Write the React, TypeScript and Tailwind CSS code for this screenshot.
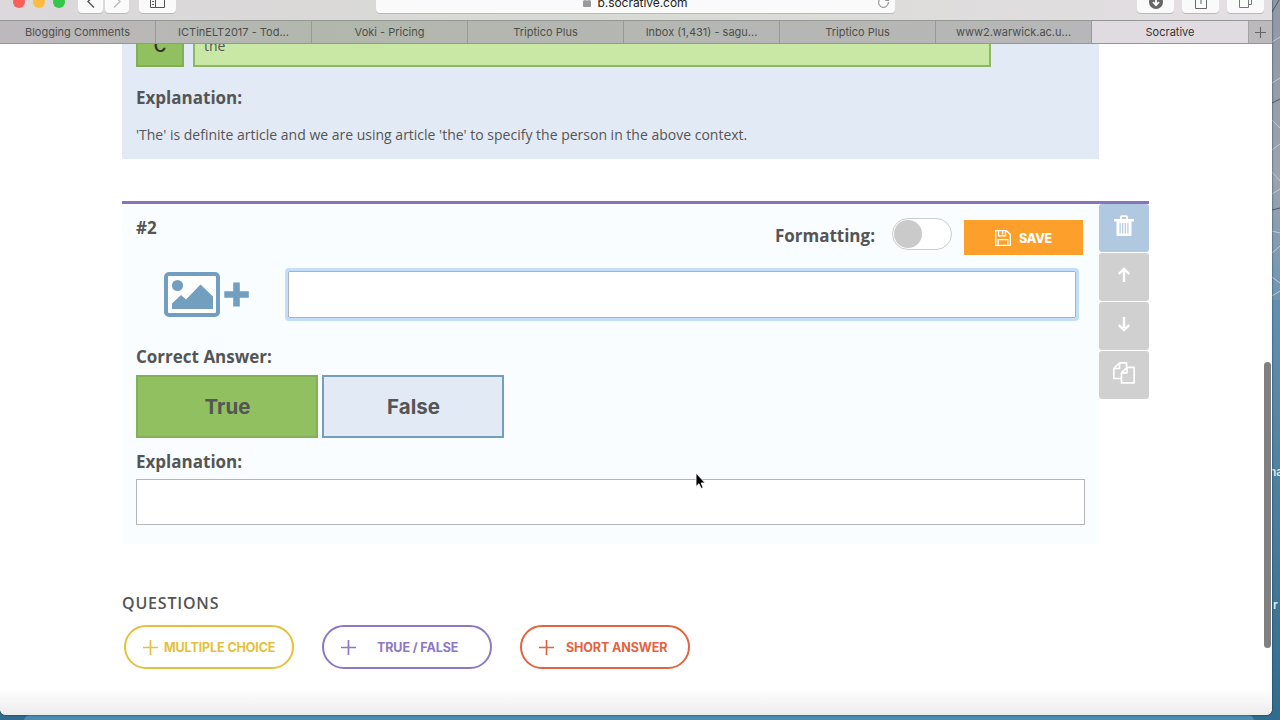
import React from 'react';
import { RotateCw } from 'lucide-react';

const tabs = [
  'Blogging Comments',
  'ICTinELT2017 - Tod...',
  'Voki - Pricing',
  'Triptico Plus',
  'Inbox (1,431) - sagu...',
  'Triptico Plus',
  'www2.warwick.ac.u...',
];

const toolButton =
  'h-[25px] shrink-0 rounded-[4px] bg-[#fafafa] shadow-[0_1px_0_#b9b9bb] flex items-end justify-center';

const Toolbar = () => (
  <div className="h-5 overflow-hidden flex items-end pb-[7px] bg-linear-to-r from-[#dcd8dc] via-[#d8dad4] via-50% to-[#e4dfe4]">
    <div className="flex gap-2 pl-[13px] mb-[5px] shrink-0">
      <div className="size-3 rounded-full bg-[#fb5f5a]" />
      <div className="size-3 rounded-full bg-[#fcbc40]" />
      <div className="size-3 rounded-full bg-[#33c748]" />
    </div>
    <div className={`${toolButton} w-[25px] ml-[13px]`}>
      <svg width="8" height="13" viewBox="0 0 8 13" className="mb-[5px]" fill="none" stroke="#555" strokeWidth="1.4">
        <path d="M7 .5 1 6.5l6 6" />
      </svg>
    </div>
    <div className={`${toolButton} w-6 ml-[2px]`}>
      <svg width="8" height="13" viewBox="0 0 8 13" className="mb-[5px]" fill="none" stroke="#bbb" strokeWidth="1.4">
        <path d="m1 .5 6 6-6 6" />
      </svg>
    </div>
    <div className={`${toolButton} w-[37px] ml-[10px]`}>
      <svg width="15" height="13" viewBox="0 0 15 13" className="mb-[5px]" fill="none" stroke="#555">
        <path d="M.5.5h14v12H.5zM5.5.5v12M2 6.5h2M2 9.5h2" />
      </svg>
    </div>
    <div className={`${toolButton} w-[519px] ml-[200px] relative`}>
      <div className="flex items-end gap-[6px] mb-[2px]">
        <svg width="8" height="11" viewBox="0 0 8 11" className="mb-[4px]">
          <path d="M2 5V3q0-2 2-2t2 2v2" fill="none" stroke="#999" strokeWidth="1.2" />
          <rect y="4.500" width="8" height="6.500" rx=".8" fill="#999" />
        </svg>
        <span className="text-[12px] leading-4 text-[#222] tracking-[-0.05px]">b.socrative.com</span>
      </div>
      <RotateCw size={13} className="absolute right-[5px] bottom-[4px] text-[#777]" strokeWidth={1.8} />
    </div>
    <div className={`${toolButton} w-[37px] ml-[242px]`}>
      <svg width="14" height="14" viewBox="0 0 14 14" className="mb-[4px]">
        <circle cx="7" cy="7" r="7" fill="#666" />
        <path d="M7 3v7M4 7l3 3.2L10 7" fill="none" stroke="#fff" strokeWidth="1.8" />
      </svg>
    </div>
    <div className={`${toolButton} w-[37px] ml-2`}>
      <svg width="12" height="16" viewBox="0 0 12 16" className="mb-[4px]" fill="none" stroke="#666">
        <path d="M4 5.5H.5v10h11v-10H8M6 11V1" />
      </svg>
    </div>
    <div className={`${toolButton} w-[37px] ml-2`}>
      <svg width="13" height="14" viewBox="0 0 13 14" className="mb-[5px]" fill="none" stroke="#777">
        <path d="M.5 2.5h9v11h-9zM3 .5h9.500v10H10" />
      </svg>
    </div>
  </div>
);

const TabBar = () => (
  <div className="h-6 flex border-y border-[#949894] text-[11px] text-[#4c4f4c] bg-linear-to-r from-[#bdb8bd] via-[#b2b7ad] via-25% to-[#b9b6bb]">
    {tabs.map((tab, i) => (
      <div key={i} className="w-[156px] shrink-0 flex items-center justify-center border-r border-[#979b97] pt-px whitespace-nowrap">
        {tab}
      </div>
    ))}
    <div className="w-[156px] shrink-0 flex items-center justify-center pt-px bg-[#dfdbe0] text-[#333]">Socrative</div>
    <div className="flex-1 flex items-center justify-center border-l border-[#a5a3a7] bg-[#bcb9bd]">
      <svg width="11" height="11" viewBox="0 0 11 11" stroke="#666" strokeWidth="1.1">
        <path d="M5.500 0v11M0 5.500h11" />
      </svg>
    </div>
  </div>
);

const PreviousQuestion = () => (
  <div className="w-[977px] h-[115px] shrink-0 bg-[#e2eaf5] px-[14px] overflow-hidden">
    <div className="flex gap-[9px] h-[48px] -mt-[25px]">
      <div className="w-12 flex items-center justify-center bg-[#90c060] border-2 border-[#82ae56] text-[17px] font-semibold text-[#333] pt-[7px]">
        C
      </div>
      <div className="w-[798px] flex items-center pl-[9px] pt-[4px] bg-[#c9e7a5] border-2 border-[#8cb863] text-[14px] font-['Open_Sans'] text-[#555]">
        the
      </div>
    </div>
    <div className="mt-[19px] text-[17px] leading-6 font-bold font-['Open_Sans'] text-[#555]">Explanation:</div>
    <div className="mt-[15px] text-[14px] leading-5 font-['Open_Sans'] text-[#555] whitespace-nowrap">
      'The' is definite article and we are using article 'the' to specify the person in the above context.
    </div>
  </div>
);

const ImagePlusIcon = () => (
  <svg width="86" height="46" viewBox="0 0 86 46" fill="#729fc0">
    <rect x="2" y="2" width="52" height="41" rx="3" fill="#fff" stroke="#729fc0" strokeWidth="4" />
    <circle cx="13.500" cy="13.500" r="5.600" />
    <path d="M8 37v-5.500l9-8.500 5 4.500L36.500 12.500 49 24.500V37z" />
    <path d="M69.200 10.500h6.600v8.700h9v6.600h-9v8.700h-6.600v-8.700h-8.900v-6.600h8.900z" />
  </svg>
);

const SaveIcon = () => (
  <svg width="16" height="16" viewBox="0 0 16 16" fill="none" stroke="#fff" strokeWidth="1.300">
    <path d="M.7.700h10.800l3.800 3.800v10.800H.7zM3.500.700v5.200h7V.7M3.200 15.300V9.700h9.600v5.600" />
    <path d="M6.900 1.400h1.500v3H6.900z" fill="#fff" stroke="none" />
  </svg>
);

const sideButton = 'w-[50px] h-12 rounded-[3px] flex justify-center';

const SideButtons = () => (
  <div className="flex flex-col gap-px">
    <div className={`${sideButton} bg-[#b1c9e0] pt-[11px]`}>
      <svg width="20" height="22" viewBox="0 0 20 22" fill="#fff">
        <path d="M0 4h20v2.500H0zM6 4V2.200Q6 .3 8 .3h4q2 0 2 1.900V4h-2V2H8v2z" />
        <path d="M2.500 6h15v15h-15zM5.500 8v10.500h1.200V8zm2.600 0v10.500h1.200V8zm2.600 0v10.500h1.200V8zm2.600 0v10.500h1.200V8z" fillRule="evenodd" />
      </svg>
    </div>
    <div className={`${sideButton} bg-[#d0d0d0] pt-[14px]`}>
      <svg width="14" height="16" viewBox="0 0 14 16" fill="none" stroke="#fff" strokeWidth="2.400">
        <path d="M7 15V2M1.800 7 7 1.900l5.200 5.100" />
      </svg>
    </div>
    <div className={`${sideButton} bg-[#d0d0d0] pt-[15px]`}>
      <svg width="14" height="16" viewBox="0 0 14 16" fill="none" stroke="#fff" strokeWidth="2.400">
        <path d="M7 0v13M1.800 8 7 13.100 12.200 8" />
      </svg>
    </div>
    <div className={`${sideButton} bg-[#d0d0d0] pt-[11px]`}>
      <svg width="22" height="22" viewBox="0 0 22 22" fill="none" stroke="#fff" strokeWidth="1.700" strokeLinejoin="round">
        <path d="M8 16.500H.8V6.500L6.500.8h7v4M6.500.8v5.700H.8" />
        <path d="M14 5.300h7.200v15.500H8.500v-10zM14 5.300v5.500H8.500" />
      </svg>
    </div>
  </div>
);

const QuestionEditor = () => (
  <div className="w-[1027px] border-t-[3px] border-[#8774bd] flex">
    <div className="w-[977px] h-[340px] shrink-0 bg-[#f9fdff] pl-[14px] font-['Open_Sans'] text-[17px] font-bold text-[#555]">
      <div className="h-[67px] flex pr-[16px]">
        <div className="pt-[12px] leading-6">#2</div>
        <div className="ml-auto mr-[17px] pt-[20px] leading-6">Formatting:</div>
        <div className="w-[60px] h-8 mt-[14px] mr-3 p-px rounded-full bg-white border border-[#ccc]">
          <div className="size-7 rounded-full bg-[#cacaca]" />
        </div>
        <button className="w-[119px] h-[35px] mt-4 flex items-center justify-center gap-[8px] bg-[#fca02b] text-white text-[12.500px] font-extrabold font-[Inter]">
          <SaveIcon />
          <span className="pt-[3px] tracking-[-0.2px]">SAVE</span>
        </button>
      </div>
      <div className="flex">
        <div className="w-[152px] pl-[28px] pt-px">
          <ImagePlusIcon />
        </div>
        <div className="w-[788px] h-[47px] bg-white border border-[#a9b2bb] outline-3 outline-[#c3def8] rounded-[1px]" />
      </div>
      <div className="mt-[27px] leading-6">Correct Answer:</div>
      <div className="mt-[6px] flex gap-[4px] font-[Inter] text-[20.500px]">
        <div className="w-[182px] h-[63px] flex items-center justify-center pt-[2px] pl-px bg-[#90c060] border-2 border-[#83b057]">True</div>
        <div className="w-[182px] h-[63px] flex items-center justify-center pt-[2px] pl-px bg-[#e2eaf5] border-2 border-[#749fbb]">False</div>
      </div>
      <div className="mt-[12px] leading-6">Explanation:</div>
      <div className="mt-[5px] w-[949px] h-[46px] bg-white border border-[#b5b5b5]" />
    </div>
    <SideButtons />
  </div>
);

const Plus = () => (
  <svg width="15" height="15" viewBox="0 0 15 15" className="shrink-0" stroke="currentColor" strokeWidth="1.700">
    <path d="M7.500 0v15M0 7.500h15" />
  </svg>
);

const AddQuestion = () => (
  <div>
    <div className="text-[16px] leading-6 font-semibold font-['Open_Sans'] text-[#555] tracking-[0.800px]">QUESTIONS</div>
    <div className="flex gap-7 mt-[10px] ml-[2px] text-[12.500px] font-bold tracking-[-0.1px] whitespace-nowrap">
      <button className="w-[170px] h-11 rounded-full border-2 border-[#e3c13c] text-[#e3c13c] flex items-center pl-[17px] gap-[6px]">
        <Plus />
        <span className="pt-[2px]">MULTIPLE CHOICE</span>
      </button>
      <button className="w-[170px] h-11 rounded-full border-2 border-[#8d78c4] text-[#8d78c4] flex items-center pl-[17px] gap-[21px]">
        <Plus />
        <span className="pt-[2px]">TRUE / FALSE</span>
      </button>
      <button className="w-[170px] h-11 rounded-full border-2 border-[#e4623f] text-[#e4623f] flex items-center pl-[17px] gap-[12px]">
        <Plus />
        <span className="pt-[2px]">SHORT ANSWER</span>
      </button>
    </div>
  </div>
);

export default function App() {
  return (
    <div className="relative w-[1280px] h-[720px] overflow-hidden bg-linear-to-b from-[#8b95a3] via-[#5f8fb0] via-45% to-[#2f6c8e] font-[Inter]">
      {/* Desktop behind the window: wallpaper texture and icon labels */}
      <div className="absolute left-[1272px] top-0 w-2 h-[300px] bg-linear-to-b from-[#8f98a5] via-[#9aa3b0] via-60% to-[#6c96b4]" />
      <span className="absolute left-[1269px] top-[463px] text-[12px] font-semibold text-[#dbe7ee]">na</span>
      <span className="absolute left-[1273px] top-[596px] text-[12px] font-semibold text-[#dbe7ee]">r</span>
      <svg className="absolute left-[1272px] top-0" width="8" height="300" viewBox="0 0 8 300" fill="none" stroke="#c0cad5" strokeWidth="1">
        <path d="M0 42l8-5M0 83l8-5M0 120l8 8M0 150l8-6M0 172l8 9M0 194l8-5M0 231l8 2M0 253l8-7M0 277l8 6M0 296l8-5" />
        <path d="M0 12 7 0M0 103l8-4M0 210l8-2" stroke="#4c5869" />
      </svg>
      <div className="absolute left-[24px] top-[715px] w-[1230px] h-[8px] rounded-t-[6px] bg-[#4d8db4]" />

      <div className="relative w-[1272px] h-[715px] rounded-b-[6px] overflow-hidden bg-white shadow-[0_0_2px_#123]">
        <Toolbar />
        <TabBar />
        <div className="h-[671px] pl-[122px] flex flex-col bg-linear-to-b from-white from-96% to-[#ececec]">
          <PreviousQuestion />
          <div className="mt-[42px]">
            <QuestionEditor />
          </div>
          <div className="mt-[47px]">
            <AddQuestion />
          </div>
        </div>
        <div className="absolute left-[1263.500px] top-[362px] w-[7px] h-[286px] rounded-full bg-[#808080]" />
      </div>

      {/* Mouse pointer */}
      <svg className="absolute left-[695px] top-[472px]" width="11" height="18" viewBox="0 0 11 18">
        <path d="M1 1v13.500l3-2.800 2 4.800 2.200-1-2-4.500h4z" fill="#000" stroke="#fff" strokeWidth=".9" />
      </svg>
    </div>
  );
}
